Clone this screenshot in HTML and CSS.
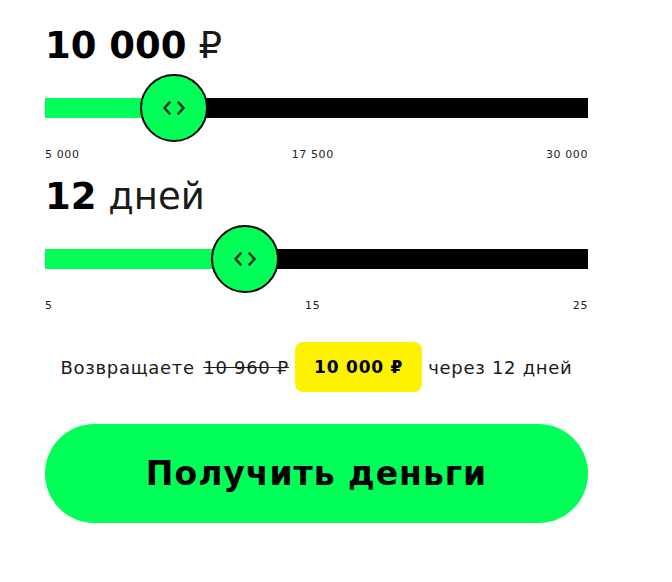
FILE: index.html
```html
<!DOCTYPE html>
<html lang="ru">
<head>
  <meta charset="UTF-8" />
  <meta name="viewport" content="width=device-width, initial-scale=1.0"/>
  <title>Калькулятор займа</title>
  <link rel="stylesheet" href="styles.css">
</head>
<body>

  <div class="calc">
    <div class="calc-value"><b>10 000</b> <span class="unit">₽</span></div>
    <div class="slider">
      <div class="track"></div>
      <div class="fill" style="width: calc((100% - 68px) * 0.2 + 34px)"></div>
      <div class="thumb" style="left: calc((100% - 68px) * 0.2)">
        <svg width="24" height="14" viewBox="0 0 24 14">
          <path d="M7.5 1.5 L2.5 7 L7.5 12.5 M16.5 1.5 L21.5 7 L16.5 12.5" fill="none" stroke="#1d2b2b" stroke-width="2.6" stroke-linecap="round" stroke-linejoin="round"/>
        </svg>
      </div>
    </div>
    <div class="ticks">
      <span>5 000</span>
      <span>17 500</span>
      <span>30 000</span>
    </div>

    <div class="calc-value days"><b>12</b> <span class="unit">дней</span></div>
    <div class="slider">
      <div class="track"></div>
      <div class="fill" style="width: calc((100% - 68px) * 0.35 + 34px)"></div>
      <div class="thumb" style="left: calc((100% - 68px) * 0.35)">
        <svg width="24" height="14" viewBox="0 0 24 14">
          <path d="M7.5 1.5 L2.5 7 L7.5 12.5 M16.5 1.5 L21.5 7 L16.5 12.5" fill="none" stroke="#1d2b2b" stroke-width="2.6" stroke-linecap="round" stroke-linejoin="round"/>
        </svg>
      </div>
    </div>
    <div class="ticks">
      <span>5</span>
      <span>15</span>
      <span>25</span>
    </div>

    <div class="summary">
      <span>Возвращаете <s>10 960 ₽</s></span>
      <span class="total">10 000 ₽</span>
      <span>через 12 дней</span>
    </div>

    <button class="get-money">Получить деньги</button>
  </div>

</body>
</html>
```

FILE: styles.css
```css
body {
  margin: 0;
  font-family: "DejaVu Sans", "Noto Sans", sans-serif;
  background-color: white;
  color: #000;
}
.calc {
  width: 543px;
  margin-left: 45px;
  padding-top: 20px;
}
.calc-value {
  font-size: 37px;
  line-height: 52px;
  height: 52px;
}
.calc-value b {
  font-weight: 700;
}
.calc-value .unit {
  font-weight: 400;
  color: #1a1a1a;
}
.calc-value.days {
  margin-top: 9px;
}
.slider {
  position: relative;
  height: 68px;
  margin-top: 2px;
  display: flex;
  align-items: center;
}
.track {
  width: 100%;
  height: 20px;
  background-color: #000;
}
.fill {
  position: absolute;
  left: 0;
  top: 24px;
  height: 20px;
  background-color: #00ff57;
}
.thumb {
  position: absolute;
  top: 0;
  width: 64px;
  height: 64px;
  border: 2px solid #000;
  border-radius: 50%;
  background-color: #00ff57;
  display: flex;
  align-items: center;
  justify-content: center;
}
.ticks {
  display: flex;
  justify-content: space-between;
  font-size: 11px;
  line-height: 14px;
  letter-spacing: 0.6px;
  color: #222;
  margin-top: 6px;
}
.summary {
  margin-top: 29px;
  display: flex;
  justify-content: center;
  align-items: center;
  gap: 6px;
  font-size: 18px;
  letter-spacing: 0.7px;
  color: #1a1a1a;
}
.summary s {
  margin-left: 2px;
}
.total {
  background-color: #fff200;
  border-radius: 8px;
  height: 50px;
  padding: 0 19px;
  display: flex;
  align-items: center;
  font-size: 17px;
  font-weight: 700;
  letter-spacing: 0.8px;
  color: #000;
}
.get-money {
  display: block;
  width: 100%;
  height: 99px;
  margin-top: 32px;
  border: none;
  border-radius: 50px;
  background-color: #00ff57;
  font-family: inherit;
  font-size: 33px;
  font-weight: 700;
  letter-spacing: 1px;
  color: #000;
  cursor: pointer;
}
```
